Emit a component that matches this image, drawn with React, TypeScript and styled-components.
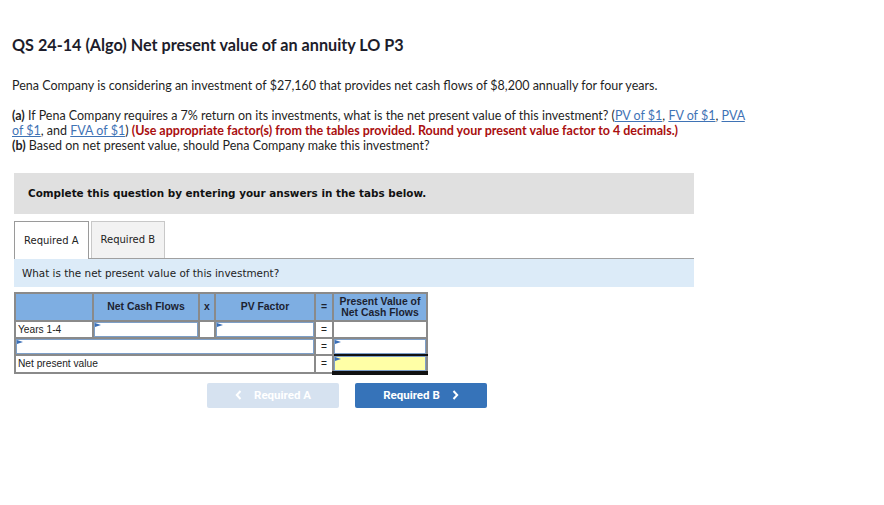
import styled, { createGlobalStyle } from "styled-components";

const GlobalStyle = createGlobalStyle`
  body {
    margin: 0;
    background: #ffffff;
    font-family: "Lato", "Liberation Sans", sans-serif;
    color: #1f1f1f;
  }
`;

const Page = styled.div`
  width: 884px;
  height: 505px;
  padding: 0 12px;
  box-sizing: border-box;
`;

const Title = styled.h1`
  margin: 0;
  padding-top: 35px;
  font-size: 16.2px;
  line-height: 20px;
  font-weight: 700;
  color: #1d1d2b;
`;

const Intro = styled.p`
  margin: 23px 0 0;
  font-size: 12.5px;
  line-height: 15px;
`;

const Question = styled.p`
  margin: 15px 0 0;
  width: 746px;
  font-size: 12.5px;
  line-height: 15.2px;
`;

const Link = styled.a`
  color: #3f73b5;
  text-decoration: underline;
`;

const Warn = styled.b`
  color: #a90e0e;
`;

const Notice = styled.div`
  margin: 19px 0 0 2px;
  width: 680px;
  height: 41px;
  background: #e0e0e0;
  display: flex;
  align-items: center;
  padding-left: 14px;
  box-sizing: border-box;
  font-family: "DejaVu Sans", Verdana, sans-serif;
  font-size: 10.4px;
  font-weight: 700;
  color: #111;
`;

const TabRow = styled.div`
  margin: 7px 0 0 2px;
  width: 680px;
  display: flex;
  gap: 2px;
  border-bottom: 1px solid #a0a0a0;
`;

const Tab = styled.div<{ $active?: boolean }>`
  padding: 0 9px;
  display: flex;
  align-items: center;
  box-sizing: border-box;
  border: 1px solid ${(p) => (p.$active ? "#9a9a9a" : "#c8c8c8")};
  border-bottom: none;
  margin-bottom: ${(p) => (p.$active ? "-1px" : "0")};
  height: ${(p) => (p.$active ? "38px" : "37px")};
  background: ${(p) => (p.$active ? "#ffffff" : "#f2f2f2")};
  font-family: "DejaVu Sans", Verdana, sans-serif;
  font-size: 10px;
  color: #222;
`;

const Prompt = styled.div`
  margin-left: 2px;
  width: 680px;
  height: 28px;
  background: #dcebf8;
  display: flex;
  align-items: center;
  padding-left: 8px;
  box-sizing: border-box;
  font-family: "DejaVu Sans", Verdana, sans-serif;
  font-size: 10.4px;
  color: #222;
`;

const Grid = styled.table`
  margin: 5px 0 0 2px;
  width: 412px;
  border-collapse: collapse;
  font-family: "Liberation Sans", Arial, sans-serif;
  font-size: 10.2px;
  color: #222;
  table-layout: fixed;
`;

const Head = styled.th`
  height: 26px;
  padding: 0;
  background: #7eaee2;
  border: 2px solid #8a8a8a;
  font-weight: 700;
  font-size: 10.4px;
  line-height: 11px;
  text-align: center;
  color: #1c2230;
`;

const Cell = styled.td<{ $center?: boolean }>`
  height: 15px;
  padding: 0 2px;
  border: 2px solid #8a8a8a;
  text-align: ${(p) => (p.$center ? "center" : "left")};
  background: #ffffff;
  white-space: nowrap;
`;

const FieldCell = styled.td<{ $under?: "single" | "double" }>`
  height: 15px;
  padding: 0;
  border: 2px solid #8a8a8a;
  ${(p) => (p.$under === "single" ? "border-bottom: 2px solid #111;" : "")}
  ${(p) => (p.$under === "double" ? "border-bottom: 4px solid #111;" : "")}
`;

const Field = styled.div<{ $fill?: string }>`
  position: relative;
  height: 15px;
  box-sizing: border-box;
  border: 1px solid #7d9fc8;
  background: ${(p) => p.$fill ?? "#ffffff"};
  &::before {
    content: "";
    position: absolute;
    left: 0;
    top: 0;
    border-left: 6px solid #3a6fb7;
    border-top: 2.5px solid transparent;
    border-bottom: 2.5px solid transparent;
  }
`;

const Buttons = styled.div`
  margin: 8px 0 0 195px;
  display: flex;
  gap: 16px;
`;

const NavButton = styled.button<{ $off?: boolean }>`
  width: 132px;
  height: 25px;
  border: none;
  border-radius: 2px;
  background: ${(p) => (p.$off ? "#d6e2f0" : "#3673b9")};
  color: #ffffff;
  font-family: "Roboto", "Liberation Sans", sans-serif;
  font-size: 11.5px;
  font-weight: 700;
  display: flex;
  align-items: center;
  justify-content: center;
  gap: 12px;
  padding: 0;
`;

const Chevron = ({ left }: { left?: boolean }) => (
  <svg width="7" height="10" viewBox="0 0 7 10">
    <path
      d={left ? "M5.5 1 L1.8 5 L5.5 9" : "M1.5 1 L5.2 5 L1.5 9"}
      fill="none"
      stroke="#ffffff"
      strokeWidth="2"
    />
  </svg>
);

export default function App() {
  return (
    <Page>
      <GlobalStyle />
      <Title>QS 24-14 (Algo) Net present value of an annuity LO P3</Title>
      <Intro>
        Pena Company is considering an investment of $27,160 that provides net cash flows of
        $8,200 annually for four years.
      </Intro>
      <Question>
        <b>(a)</b> If Pena Company requires a 7% return on its investments, what is the net
        present value of this investment? (<Link>PV of $1</Link>, <Link>FV of $1</Link>,{" "}
        <Link>PVA</Link> <Link>of $1</Link>, and <Link>FVA of $1</Link>){" "}
        <Warn>
          (Use appropriate factor(s) from the tables provided. Round your present value factor
          to 4 decimals.)
        </Warn>
        <br />
        <b>(b)</b> Based on net present value, should Pena Company make this investment?
      </Question>
      <Notice>Complete this question by entering your answers in the tabs below.</Notice>
      <TabRow>
        <Tab $active>Required A</Tab>
        <Tab>Required B</Tab>
      </TabRow>
      <Prompt>What is the net present value of this investment?</Prompt>
      <Grid>
        <colgroup>
          <col style={{ width: 78 }} />
          <col style={{ width: 106 }} />
          <col style={{ width: 16 }} />
          <col style={{ width: 100 }} />
          <col style={{ width: 18 }} />
          <col style={{ width: 94 }} />
        </colgroup>
        <thead>
          <tr>
            <Head />
            <Head>Net Cash Flows</Head>
            <Head>x</Head>
            <Head>PV Factor</Head>
            <Head>=</Head>
            <Head>
              Present Value of
              <br />
              Net Cash Flows
            </Head>
          </tr>
        </thead>
        <tbody>
          <tr>
            <Cell>Years 1-4</Cell>
            <FieldCell>
              <Field />
            </FieldCell>
            <Cell />
            <FieldCell>
              <Field />
            </FieldCell>
            <Cell $center>=</Cell>
            <Cell />
          </tr>
          <tr>
            <FieldCell colSpan={4}>
              <Field />
            </FieldCell>
            <Cell $center>=</Cell>
            <FieldCell $under="single">
              <Field />
            </FieldCell>
          </tr>
          <tr>
            <Cell colSpan={4}>Net present value</Cell>
            <Cell $center>=</Cell>
            <FieldCell $under="double">
              <Field $fill="#ffffa6" />
            </FieldCell>
          </tr>
        </tbody>
      </Grid>
      <Buttons>
        <NavButton $off>
          <Chevron left />
          Required A
        </NavButton>
        <NavButton>
          Required B
          <Chevron />
        </NavButton>
      </Buttons>
    </Page>
  );
}
